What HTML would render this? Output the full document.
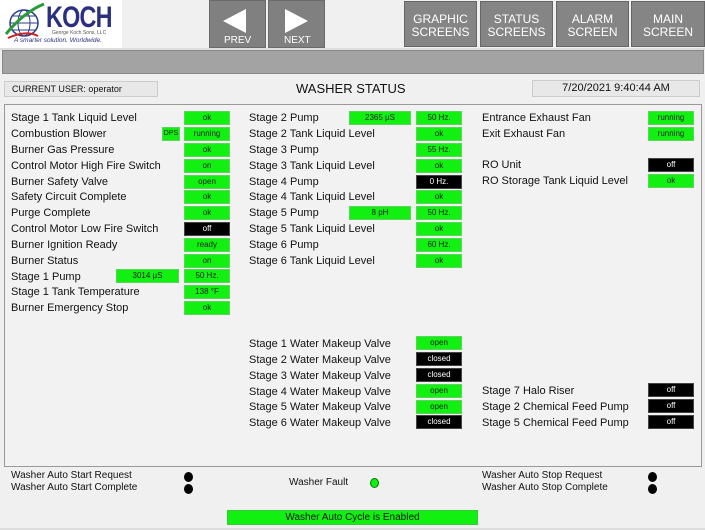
<!DOCTYPE html>
<html><head><meta charset="utf-8"><style>
*{box-sizing:border-box;margin:0;padding:0}
body{width:705px;height:530px;background:#f0f0f0;font-family:"Liberation Sans",Arial,sans-serif;position:relative;overflow:hidden;color:#111}
div{position:absolute}
.l{font-size:11px;line-height:14px;white-space:nowrap}
.b{height:14px;width:46px;background:#11f011;border:1px solid #5ad45a;font-size:8px;line-height:12px;text-align:center;color:#222}
.k{background:#000;color:#fff;border-color:#444}
.btn{top:0;height:48px;background:#808080;border:1px solid #6a6a6a;color:#fff;text-align:center;font-size:12px}
.rb{top:1px;height:46px;background:#858585;border:1px solid #666;color:#fff;text-align:center;font-size:12px;line-height:13px;padding-top:11px}
.dot{width:9px;height:10px;border-radius:50%;background:#000}
</style></head><body>
<div style="left:0;top:0;width:122px;height:48px;background:#fff"></div>
<svg style="position:absolute;left:4px;top:2px" width="42" height="40" viewBox="0 0 42 40"><ellipse cx="20" cy="21" rx="14" ry="13" fill="none" stroke="#2a3d8a" stroke-width="1.5"/><ellipse cx="20" cy="21" rx="6" ry="13" fill="none" stroke="#2a3d8a"/><line x1="6" y1="21" x2="34" y2="21" stroke="#2a3d8a"/><line x1="8" y1="14" x2="32" y2="14" stroke="#2a3d8a"/><line x1="8" y1="28" x2="32" y2="28" stroke="#2a3d8a"/><path d="M2 32 Q20 10 40 2" stroke="#2a9a3a" stroke-width="3" fill="none"/><path d="M4 36 Q22 28 34 34" stroke="#c22" stroke-width="2" fill="none"/></svg>
<div style="left:46px;top:1px;font-size:30px;font-weight:bold;color:#2a2f80;letter-spacing:-1px;transform:scaleX(0.78);transform-origin:left top">KOCH</div>
<div style="left:52px;top:30px;font-size:5px;color:#555">George Koch Sons, LLC</div>
<div style="left:14px;top:37px;font-size:6.5px;font-style:italic;color:#2a2f80">A smarter solution. Worldwide.</div>
<div class="btn" style="left:209px;width:57px"><svg width="40" height="30" style="position:absolute;left:8px;top:8px"><polygon points="5,12 28,0 28,24" fill="#fff"/></svg><span style="position:absolute;left:14px;top:34px;font-size:10px">PREV</span></div>
<div class="btn" style="left:268px;width:57px"><svg width="40" height="30" style="position:absolute;left:14px;top:8px"><polygon points="2,0 25,12 2,24" fill="#fff"/></svg><span style="position:absolute;left:15px;top:34px;font-size:10px">NEXT</span></div>
<div class="rb" style="left:404px;width:73px">GRAPHIC<br>SCREENS</div>
<div class="rb" style="left:480px;width:73px">STATUS<br>SCREENS</div>
<div class="rb" style="left:556px;width:73px">ALARM<br>SCREEN</div>
<div class="rb" style="left:631px;width:74px">MAIN<br>SCREEN</div>
<div style="left:0;top:48px;width:705px;height:2px;background:#ddd"></div>
<div style="left:2px;top:50px;width:702px;height:24px;background:#a3a3a3;border:1px solid #888"></div>
<div style="left:4px;top:81px;width:154px;height:16px;background:#e8e8e8;border:1px solid #ccc;font-size:9px;line-height:14px;padding-left:7px">CURRENT USER: operator</div>
<div style="left:296px;top:81px;font-size:13px">WASHER STATUS</div>
<div style="left:532px;top:80px;width:168px;height:17px;background:#e8e8e8;border:1px solid #ccc;font-size:11px;line-height:15px;text-align:center">7/20/2021 9:40:44 AM</div>
<div style="left:4px;top:104px;width:698px;height:363px;border:1px solid #999;background:#f2f2f2"></div>

<div class="l" style="left:11px;top:111px">Stage 1 Tank Liquid Level</div><div class="b" style="left:184px;top:111px">ok</div>
<div class="l" style="left:11px;top:127px">Combustion Blower</div><div class="b" style="left:162px;top:127px;width:18px;font-size:7px">DPS</div><div class="b" style="left:184px;top:127px">running</div>
<div class="l" style="left:11px;top:143px">Burner Gas Pressure</div><div class="b" style="left:184px;top:143px">ok</div>
<div class="l" style="left:11px;top:159px">Control Motor High Fire Switch</div><div class="b" style="left:184px;top:159px">on</div>
<div class="l" style="left:11px;top:175px">Burner Safety Valve</div><div class="b" style="left:184px;top:175px">open</div>
<div class="l" style="left:11px;top:190px">Safety Circuit Complete</div><div class="b" style="left:184px;top:190px">ok</div>
<div class="l" style="left:11px;top:206px">Purge Complete</div><div class="b" style="left:184px;top:206px">ok</div>
<div class="l" style="left:11px;top:222px">Control Motor Low Fire Switch</div><div class="b k" style="left:184px;top:222px">off</div>
<div class="l" style="left:11px;top:238px">Burner Ignition Ready</div><div class="b" style="left:184px;top:238px">ready</div>
<div class="l" style="left:11px;top:254px">Burner Status</div><div class="b" style="left:184px;top:254px">on</div>
<div class="l" style="left:11px;top:270px">Stage 1 Pump</div><div class="b" style="left:116px;top:269px;width:63px">3014 µS</div><div class="b" style="left:184px;top:269px">50 Hz.</div>
<div class="l" style="left:11px;top:285px">Stage 1 Tank Temperature</div><div class="b" style="left:184px;top:285px">138 °F</div>
<div class="l" style="left:11px;top:301px">Burner Emergency Stop</div><div class="b" style="left:184px;top:301px">ok</div>

<div class="l" style="left:249px;top:111px">Stage 2 Pump</div><div class="b" style="left:349px;top:111px;width:62px">2365 µS</div><div class="b" style="left:416px;top:111px">50 Hz.</div>
<div class="l" style="left:249px;top:127px">Stage 2 Tank Liquid Level</div><div class="b" style="left:416px;top:127px">ok</div>
<div class="l" style="left:249px;top:143px">Stage 3 Pump</div><div class="b" style="left:416px;top:143px">55 Hz.</div>
<div class="l" style="left:249px;top:159px">Stage 3 Tank Liquid Level</div><div class="b" style="left:416px;top:159px">ok</div>
<div class="l" style="left:249px;top:175px">Stage 4 Pump</div><div class="b k" style="left:416px;top:175px">0 Hz.</div>
<div class="l" style="left:249px;top:190px">Stage 4 Tank Liquid Level</div><div class="b" style="left:416px;top:190px">ok</div>
<div class="l" style="left:249px;top:206px">Stage 5 Pump</div><div class="b" style="left:349px;top:206px;width:62px">8 pH</div><div class="b" style="left:416px;top:206px">50 Hz.</div>
<div class="l" style="left:249px;top:222px">Stage 5 Tank Liquid Level</div><div class="b" style="left:416px;top:222px">ok</div>
<div class="l" style="left:249px;top:238px">Stage 6 Pump</div><div class="b" style="left:416px;top:238px">60 Hz.</div>
<div class="l" style="left:249px;top:254px">Stage 6 Tank Liquid Level</div><div class="b" style="left:416px;top:254px">ok</div>

<div class="l" style="left:249px;top:337px">Stage 1 Water Makeup Valve</div><div class="b" style="left:416px;top:336px">open</div>
<div class="l" style="left:249px;top:353px">Stage 2 Water Makeup Valve</div><div class="b k" style="left:416px;top:352px">closed</div>
<div class="l" style="left:249px;top:369px">Stage 3 Water Makeup Valve</div><div class="b k" style="left:416px;top:368px">closed</div>
<div class="l" style="left:249px;top:385px">Stage 4 Water Makeup Valve</div><div class="b" style="left:416px;top:384px">open</div>
<div class="l" style="left:249px;top:400px">Stage 5 Water Makeup Valve</div><div class="b" style="left:416px;top:400px">open</div>
<div class="l" style="left:249px;top:416px">Stage 6 Water Makeup Valve</div><div class="b k" style="left:416px;top:415px">closed</div>

<div class="l" style="left:482px;top:111px">Entrance Exhaust Fan</div><div class="b" style="left:648px;top:111px">running</div>
<div class="l" style="left:482px;top:127px">Exit Exhaust Fan</div><div class="b" style="left:648px;top:127px">running</div>
<div class="l" style="left:482px;top:158px">RO Unit</div><div class="b k" style="left:648px;top:158px">off</div>
<div class="l" style="left:482px;top:174px">RO Storage Tank Liquid Level</div><div class="b" style="left:648px;top:174px">ok</div>
<div class="l" style="left:482px;top:384px">Stage 7 Halo Riser</div><div class="b k" style="left:648px;top:383px">off</div>
<div class="l" style="left:482px;top:400px">Stage 2 Chemical Feed Pump</div><div class="b k" style="left:648px;top:399px">off</div>
<div class="l" style="left:482px;top:416px">Stage 5 Chemical Feed Pump</div><div class="b k" style="left:648px;top:415px">off</div>

<div class="l" style="left:11px;top:470px;font-size:10px;line-height:12px">Washer Auto Start Request</div><div class="dot" style="left:184px;top:472px"></div>
<div class="l" style="left:11px;top:482px;font-size:10px;line-height:12px">Washer Auto Start Complete</div><div class="dot" style="left:184px;top:484px"></div>
<div class="l" style="left:289px;top:477px;font-size:10px;line-height:12px">Washer Fault</div><div class="dot" style="left:370px;top:478px;background:#1e1;border:1px solid #070"></div>
<div class="l" style="left:482px;top:470px;font-size:10px;line-height:12px">Washer Auto Stop Request</div><div class="dot" style="left:648px;top:472px"></div>
<div class="l" style="left:482px;top:482px;font-size:10px;line-height:12px">Washer Auto Stop Complete</div><div class="dot" style="left:648px;top:484px"></div>
<div style="left:227px;top:510px;width:251px;height:15px;background:#11f011;border:1px solid #3c3;font-size:10px;line-height:13px;text-align:center">Washer Auto Cycle is Enabled</div>
<div style="left:0;top:528px;width:705px;height:2px;background:#ddd"></div>
</body></html>
